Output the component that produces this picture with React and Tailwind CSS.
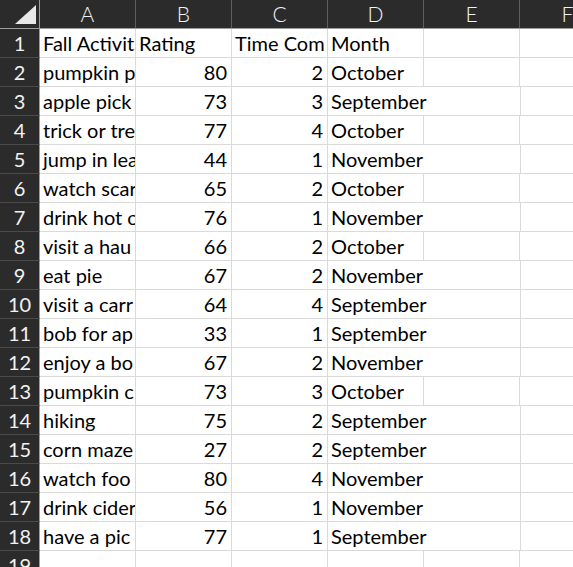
import React from "react";

const rows = [
  ["Fall Activit", "Rating", "Time Com", "Month"],
  ["pumpkin p", "80", "2", "October"],
  ["apple pick", "73", "3", "September"],
  ["trick or tre", "77", "4", "October"],
  ["jump in lea", "44", "1", "November"],
  ["watch scar", "65", "2", "October"],
  ["drink hot c", "76", "1", "November"],
  ["visit a hau", "66", "2", "October"],
  ["eat pie", "67", "2", "November"],
  ["visit a carr", "64", "4", "September"],
  ["bob for ap", "33", "1", "September"],
  ["enjoy a bo", "67", "2", "November"],
  ["pumpkin c", "73", "3", "October"],
  ["hiking", "75", "2", "September"],
  ["corn maze", "27", "2", "September"],
  ["watch foo", "80", "4", "November"],
  ["drink cider", "56", "1", "November"],
  ["have a pic", "77", "1", "September"],
  ["", "", "", ""],
];

const cols = ["A", "B", "C", "D", "E", "F"];
const font = { fontFamily: "Lato, 'Liberation Sans', sans-serif" };

const base =
  "w-[96px] h-[29px] shrink-0 border-b border-[#dadada] flex items-center whitespace-nowrap text-[20px] leading-[24px]";

export default function App() {
  return (
    <div
      className="w-[573px] h-[567px] overflow-hidden bg-white text-black"
      style={font}
    >
      <div className="flex h-[29px] bg-[#2b2b2b] border-b border-[#9c9c9c] w-max">
        <div className="w-[40px] h-[28px] shrink-0 border-r border-[#9c9c9c] flex items-start justify-start">
          <svg width="39" height="28" viewBox="0 0 39 28">
            <polygon points="15,24 36,24 36,5" fill="#e8e8e8" />
          </svg>
        </div>
        {cols.map((c) => (
          <div
            key={c}
            className="w-[96px] h-[28px] shrink-0 border-r border-[#5e5e5e] flex items-center justify-center text-[21px] leading-[24px] text-[#f2f2f2] font-light"
          >
            {c}
          </div>
        ))}
      </div>
      {rows.map((r, i) => {
        const overflowD = r[3].length > 7;
        const isText = i === 0;
        return (
          <div key={i} className="flex h-[29px] w-max">
            <div className="w-[40px] h-[29px] shrink-0 bg-[#2b2b2b] border-r border-[#9c9c9c] border-b border-b-[#4a4a4a] flex items-center justify-center text-[20px] leading-[24px] text-[#f2f2f2]">
              {i + 1}
            </div>
            <div className={base + " border-r overflow-hidden pl-[3px]"}>{r[0]}</div>
            <div
              className={
                base +
                (isText
                  ? " border-r overflow-hidden pl-[3px]"
                  : " border-r overflow-hidden justify-end pr-[4px]")
              }
            >
              {r[1]}
            </div>
            <div
              className={
                base +
                (isText
                  ? " border-r overflow-hidden pl-[3px]"
                  : " border-r overflow-hidden justify-end pr-[4px]")
              }
            >
              {r[2]}
            </div>
            <div
              className={
                overflowD
                  ? base + " pl-[3px] overflow-visible"
                  : base + " border-r pl-[3px]"
              }
            >
              {r[3]}
            </div>
            <div
              className={
                overflowD
                  ? "w-[97px] h-[29px] shrink-0 border-r border-b border-[#dadada]"
                  : "w-[96px] h-[29px] shrink-0 border-r border-b border-[#dadada]"
              }
            />
            <div className="w-[96px] h-[29px] shrink-0 border-r border-b border-[#dadada]" />
          </div>
        );
      })}
    </div>
  );
}
